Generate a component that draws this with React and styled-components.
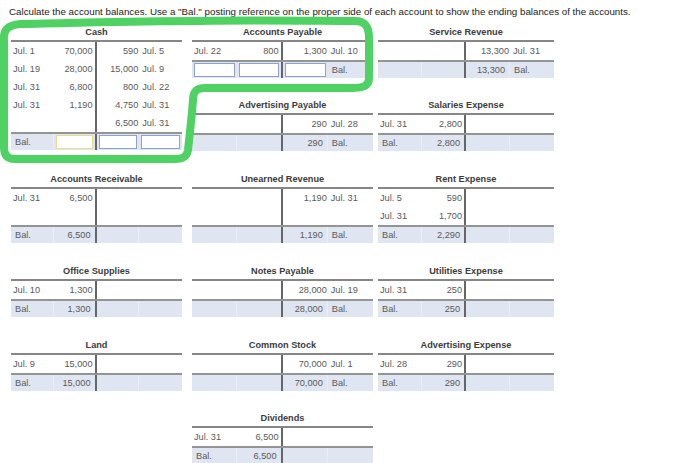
import React from 'react';
import styled, { createGlobalStyle, css } from 'styled-components';

const GlobalStyle = createGlobalStyle`
  html, body {
    margin: 0;
    padding: 0;
    background: #fff;
  }
  body {
    font-family: "Liberation Sans", Arial, sans-serif;
  }
`;

const Page = styled.div`
  position: relative;
  width: 700px;
  height: 463px;
  padding-top: 6px;
  box-sizing: border-box;
  overflow: hidden;
`;

const Instructions = styled.p`
  margin: 0 0 7px 9px;
  font-size: 9.75px;
  line-height: 12px;
  color: #222;
  white-space: nowrap;
`;

const Board = styled.div`
  display: flex;
  flex-direction: column;
  gap: 21px;
  margin-left: 11px;
`;

const Band = styled.div`
  display: grid;
  grid-template-columns: 181px 186px 176px;
  align-items: start;
`;

const Stack = styled.div`
  display: flex;
  flex-direction: column;
  gap: 20px;
`;

const Account = styled.div`
  width: ${(p) => p.$width}px;
`;

const Title = styled.div`
  height: 15px;
  line-height: 15px;
  text-align: center;
  font-size: 9.2px;
  font-weight: bold;
  color: #3c3c3c;
`;

const Ledger = styled.div`
  border-top: 2px solid #868686;
`;

const Row = styled.div`
  display: grid;
  grid-template-columns: repeat(4, 1fr);
  height: 18px;
  box-sizing: border-box;
  ${(p) =>
    p.$bal &&
    css`
      background: #e0e6f1;
      border-top: 2px solid #949494;
    `}
`;

const Cell = styled.div`
  display: flex;
  align-items: center;
  justify-content: ${(p) => (p.$align === 'right' ? 'flex-end' : 'flex-start')};
  min-width: 0;
  padding: ${(p) => (p.$align === 'right' ? `0 ${p.$pad}px 0 0` : `0 0 0 ${p.$pad}px`)};
  font-size: 9.2px;
  color: #595959;
  white-space: nowrap;
  ${(p) => p.$divider && 'border-right: 2px solid #666;'}
  ${(p) => p.$seam && 'border-right: 1px solid #eaeef6;'}
  ${(p) => p.$box && 'padding: 0 2px;'}
`;

const AnswerBox = styled.div`
  flex: 1;
  height: 14px;
  box-sizing: border-box;
  background: #fff;
  border: 1px solid ${(p) => (p.$active ? '#ecd88e' : '#8ea3cc')};
`;

const Highlight = styled.svg`
  position: absolute;
  left: 0;
  top: 0;
  pointer-events: none;
`;

const BOX = { box: true };
const ACTIVE = { box: true, active: true };

const account = (title, width, rows, bal) => ({ title, width, rows, bal });

const bands = [
  [
    [
      account(
        'Cash',
        171,
        [
          ['Jul. 1', '70,000', '590', 'Jul. 5'],
          ['Jul. 19', '28,000', '15,000', 'Jul. 9'],
          ['Jul. 31', '6,800', '800', 'Jul. 22'],
          ['Jul. 31', '1,190', '4,750', 'Jul. 31'],
          ['', '', '6,500', 'Jul. 31'],
        ],
        ['Bal.', ACTIVE, BOX, BOX]
      ),
    ],
    [
      account('Accounts Payable', 181, [['Jul. 22', '800', '1,300', 'Jul. 10']], [BOX, BOX, BOX, 'Bal.']),
      account('Advertising Payable', 181, [['', '', '290', 'Jul. 28']], ['', '', '290', 'Bal.']),
    ],
    [
      account('Service Revenue', 176, [['', '', '13,300', 'Jul. 31']], ['', '', '13,300', 'Bal.']),
      account('Salaries Expense', 176, [['Jul. 31', '2,800', '', '']], ['Bal.', '2,800', '', '']),
    ],
  ],
  [
    [account('Accounts Receivable', 171, [['Jul. 31', '6,500', '', ''], ['', '', '', '']], ['Bal.', '6,500', '', ''])],
    [account('Unearned Revenue', 181, [['', '', '1,190', 'Jul. 31'], ['', '', '', '']], ['', '', '1,190', 'Bal.'])],
    [
      account(
        'Rent Expense',
        176,
        [
          ['Jul. 5', '590', '', ''],
          ['Jul. 31', '1,700', '', ''],
        ],
        ['Bal.', '2,290', '', '']
      ),
    ],
  ],
  [
    [account('Office Supplies', 171, [['Jul. 10', '1,300', '', '']], ['Bal.', '1,300', '', ''])],
    [account('Notes Payable', 181, [['', '', '28,000', 'Jul. 19']], ['', '', '28,000', 'Bal.'])],
    [account('Utilities Expense', 176, [['Jul. 31', '250', '', '']], ['Bal.', '250', '', ''])],
  ],
  [
    [account('Land', 171, [['Jul. 9', '15,000', '', '']], ['Bal.', '15,000', '', ''])],
    [
      account('Common Stock', 181, [['', '', '70,000', 'Jul. 1']], ['', '', '70,000', 'Bal.']),
      account('Dividends', 181, [['Jul. 31', '6,500', '', '']], ['Bal.', '6,500', '', '']),
    ],
    [account('Advertising Expense', 176, [['Jul. 28', '290', '', '']], ['Bal.', '290', '', ''])],
  ],
];

// date | amount || amount | date
const ALIGN = ['left', 'right', 'right', 'left'];
const ENTRY_PAD = [2, 2, 1, 3];
const BAL_PAD = [4, 4, 4, 4];

function LedgerRow({ cells, bal }) {
  return (
    <Row $bal={bal}>
      {cells.map((value, i) => {
        const isBox = typeof value === 'object';
        return (
          <Cell
            key={i}
            $align={ALIGN[i]}
            $pad={bal ? BAL_PAD[i] : ENTRY_PAD[i]}
            $divider={i === 1}
            $seam={bal && !isBox && (i === 0 || i === 2)}
            $box={isBox}
          >
            {isBox ? <AnswerBox $active={value.active} /> : value}
          </Cell>
        );
      })}
    </Row>
  );
}

function TAccount({ data }) {
  return (
    <Account $width={data.width}>
      <Title>{data.title}</Title>
      <Ledger>
        {data.rows.map((r, i) => (
          <LedgerRow key={i} cells={r} />
        ))}
        <LedgerRow cells={data.bal} bal />
      </Ledger>
    </Account>
  );
}

export default function App() {
  return (
    <>
      <GlobalStyle />
      <Page>
        <Instructions>
          Calculate the account balances. Use a "Bal." posting reference on the proper side of each account to show
          the ending balances of the accounts.
        </Instructions>
        <Board>
          {bands.map((band, b) => (
            <Band key={b}>
              {band.map((col, c) => (
                <Stack key={c}>
                  {col.map((acc) => (
                    <TAccount key={acc.title} data={acc} />
                  ))}
                </Stack>
              ))}
            </Band>
          ))}
        </Board>
        <Highlight width="700" height="463" viewBox="0 0 700 463">
          <path
            d="M 4 40 C 3 30, 8 25, 20 24 C 80 23, 130 21, 200 21 C 260 20, 320 21, 355 21 C 366 21, 369 28, 369 38 L 369 78 C 369 86, 363 88, 352 88 L 205 88 C 196 88, 193 92, 193 100 C 191 125, 189 140, 188 150 C 187 157, 183 159, 175 159 L 15 159 C 7 159, 4 155, 4 147 L 4 40"
            fill="none"
            stroke="#50d164"
            strokeWidth="8"
            strokeLinecap="round"
            strokeLinejoin="round"
          />
        </Highlight>
      </Page>
    </>
  );
}
